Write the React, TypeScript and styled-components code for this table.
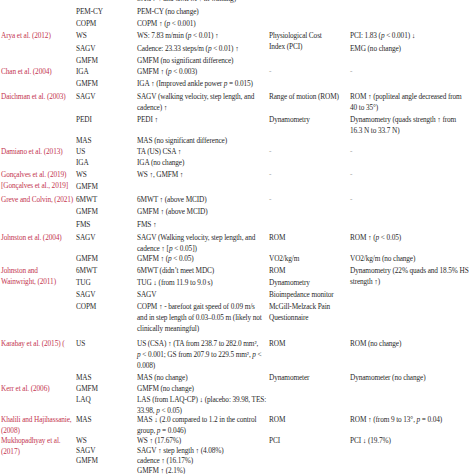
import React from 'react';
import styled, { createGlobalStyle } from 'styled-components';

const GlobalStyle = createGlobalStyle`
    html, body {
        margin: 0;
        padding: 0;
        background: #ffffff;
        overflow: hidden;
    }
    body {
        font-family: "Liberation Serif", "Times New Roman", serif;
        font-size: 7.3px;
        line-height: 11px;
        letter-spacing: -0.12px;
        color: #2a2a2a;
    }
`;

// vertical centre of every text line of the table, top to bottom
const line_centres = [
    -2, 11, 23, 35, 48, 60, 71, 83, 96, 107, 119, 130, 140, 151, 162, 174, 186, 199, 211, 224,
    237, 247, 258, 270, 282, 294, 306, 318, 330, 343, 354, 366, 377, 388, 399, 409, 419, 429,
    440, 450, 460, 470,
];

const row_track = line_centres
    .map((c, i) => (i < line_centres.length - 1 ? line_centres[i + 1] - c : 11))
    .map((h) => `${h}px`)
    .join(' ');

type Tone = 'author' | 'text' | 'dash';

interface Entry {
    row: number;
    col: number;
    lines: string[];
    tone?: Tone;
}

const A = (row: number, lines: string[]): Entry => ({ row, col: 1, lines, tone: 'author' });
const T = (row: number, col: number, ...lines: string[]): Entry => ({ row, col, lines });
const D = (row: number): Entry[] => [
    { row, col: 4, lines: ['-'], tone: 'dash' },
    { row, col: 5, lines: ['-'], tone: 'dash' },
];

const entries: Entry[] = [
    T(0, 3, 'SAGV ↑ and GMFM ↑ in walking)'),

    T(1, 2, 'PEM-CY'), T(1, 3, 'PEM-CY (no change)'),
    T(2, 2, 'COPM'), T(2, 3, 'COPM ↑ (p < 0.001)'),

    A(3, ['Arya et al. (2012)']),
    T(3, 2, 'WS'), T(3, 3, 'WS: 7.83 m/min (p < 0.01) ↑'),
    T(3, 4, 'Physiological Cost', 'Index (PCI)'), T(3, 5, 'PCI: 1.83 (p < 0.001) ↓'),
    T(4, 2, 'SAGV'), T(4, 3, 'Cadence: 23.33 steps/m (p < 0.01) ↑'), T(4, 5, 'EMG (no change)'),
    T(5, 2, 'GMFM'), T(5, 3, 'GMFM (no significant difference)'),

    A(6, ['Chan et al. (2004)']),
    T(6, 2, 'IGA'), T(6, 3, 'GMFM ↑ (p < 0.003)'), ...D(6),
    T(7, 2, 'GMFM'), T(7, 3, 'IGA ↑ (Improved ankle power p = 0.015)'),

    A(8, ['Daichman et al. (2003)']),
    T(8, 2, 'SAGV'), T(8, 3, 'SAGV (walking velocity, step length, and', 'cadence) ↑'),
    T(8, 4, 'Range of motion (ROM)'), T(8, 5, 'ROM ↑ (popliteal angle decreased from', '40 to 35°)'),
    T(10, 2, 'PEDI'), T(10, 3, 'PEDI ↑'),
    T(10, 4, 'Dynamometry'), T(10, 5, 'Dynamometry (quads strength ↑ from', '16.3 N to 33.7 N)'),
    T(12, 2, 'MAS'), T(12, 3, 'MAS (no significant difference)'),

    A(13, ['Damiano et al. (2013)']),
    T(13, 2, 'US'), T(13, 3, 'TA (US) CSA ↑'), ...D(13),
    T(14, 2, 'IGA'), T(14, 3, 'IGA (no change)'),

    A(15, ['Gonçalves et al. (2019)', '[Gonçalves et al., 2019]']),
    T(15, 2, 'WS'), T(15, 3, 'WS ↑, GMFM ↑'), ...D(15),
    T(16, 2, 'GMFM'),

    A(17, ['Greve and Colvin, (2021)']),
    T(17, 2, '6MWT'), T(17, 3, '6MWT ↑ (above MCID)'), ...D(17),
    T(18, 2, 'GMFM'), T(18, 3, 'GMFM ↑ (above MCID)'),
    T(19, 2, 'FMS'), T(19, 3, 'FMS ↑'),

    A(20, ['Johnston et al. (2004)']),
    T(20, 2, 'SAGV'), T(20, 3, 'SAGV (Walking velocity, step length, and', 'cadence ↑ [p < 0.05])'),
    T(20, 4, 'ROM'), T(20, 5, 'ROM ↑ (p < 0.05)'),
    T(22, 2, 'GMFM'), T(22, 3, 'GMFM ↑ (p < 0.05)'),
    T(22, 4, 'VO2/kg/m'), T(22, 5, 'VO2/kg/m (no change)'),

    A(23, ['Johnston and', 'Wainwright, (2011)']),
    T(23, 2, '6MWT'), T(23, 3, '6MWT (didn’t meet MDC)'),
    T(23, 4, 'ROM'), T(23, 5, 'Dynamometry (22% quads and 18.5% HS', 'strength ↑)'),
    T(24, 2, 'TUG'), T(24, 3, 'TUG ↓ (from 11.9 to 9.0 s)'), T(24, 4, 'Dynamometry'),
    T(25, 2, 'SAGV'), T(25, 3, 'SAGV'), T(25, 4, 'Bioimpedance monitor'),
    T(26, 2, 'COPM'),
    T(26, 3, 'COPM ↑ - barefoot gait speed of 0.09 m/s', 'and in step length of 0.03–0.05 m (likely not', 'clinically meaningful)'),
    T(26, 4, 'McGill-Melzack Pain', 'Questionnaire'),

    A(29, ['Karabay et al. (2015) (']),
    T(29, 2, 'US'),
    T(29, 3, 'US (CSA) ↑ (TA from 238.7 to 282.0 mm²,', 'p < 0.001; GS from 207.9 to 229.5 mm², p <', '0.008)'),
    T(29, 4, 'ROM'), T(29, 5, 'ROM (no change)'),
    T(32, 2, 'MAS'), T(32, 3, 'MAS (no change)'),
    T(32, 4, 'Dynamometer'), T(32, 5, 'Dynamometer (no change)'),

    A(33, ['Kerr et al. (2006)']),
    T(33, 2, 'GMFM'), T(33, 3, 'GMFM (no change)'),
    T(34, 2, 'LAQ'), T(34, 3, 'LAS (from LAQ-CP) ↓ (placebo: 39.98, TES:', '33.98, p < 0.05)'),

    A(36, ['Khalili and Hajihassanie,', '(2008)']),
    T(36, 2, 'MAS'), T(36, 3, 'MAS ↓ (2.0 compared to 1.2 in the control', 'group, p = 0.046)'),
    T(36, 4, 'ROM'), T(36, 5, 'ROM ↑ (from 9 to 13°, p = 0.04)'),

    A(38, ['Mukhopadhyay et al.', '(2017)']),
    T(38, 2, 'WS'), T(38, 3, 'WS ↑ (17.67%)'),
    T(38, 4, 'PCI'), T(38, 5, 'PCI ↓ (19.7%)'),
    T(39, 2, 'SAGV'), T(39, 3, 'SAGV ↑ step length ↑ (4.08%)'),
    T(40, 2, 'GMFM'), T(40, 3, 'cadence ↑ (16.17%)'),
    T(41, 3, 'GMFM ↑ (2.1%)'),
];

const Sheet = styled.div`
    display: grid;
    grid-template-columns: 75px 61px 132px 81px 1fr;
    grid-template-rows: ${row_track};
    margin-top: ${line_centres[0] - 5.5}px;
    padding-left: 1px;
`;

const Cell = styled.div<{ $row: number; $col: number; $span: number; $tone: Tone }>`
    grid-row: ${({ $row, $span }) => `${$row + 1} / span ${$span}`};
    grid-column: ${({ $col }) => $col};
    white-space: nowrap;
    color: ${({ $tone }) =>
        $tone === 'author' ? '#c4364f' :
        $tone === 'dash' ? '#a8a8a8' :
        '#2a2a2a'};
`;

const Line = styled.div`
    height: 11px;
`;

const Stat = styled.i`
    font-style: italic;
`;

function RichText({ text }: { text: string }) {
    const parts = text.split(/(\bp\b)(?= [<=])/);
    return (
        <>
            {parts.map((part, i) => (part === 'p' ? <Stat key={i}>p</Stat> : <React.Fragment key={i}>{part}</React.Fragment>))}
        </>
    );
}

export default function App() {
    return (
        <>
            <GlobalStyle />
            <Sheet>
                {entries.map((e, i) => (
                    <Cell key={i} $row={e.row} $col={e.col} $span={e.lines.length} $tone={e.tone ?? 'text'}>
                        {e.lines.map((l, j) => (
                            <Line key={j}>
                                <RichText text={l} />
                            </Line>
                        ))}
                    </Cell>
                ))}
            </Sheet>
        </>
    );
}
